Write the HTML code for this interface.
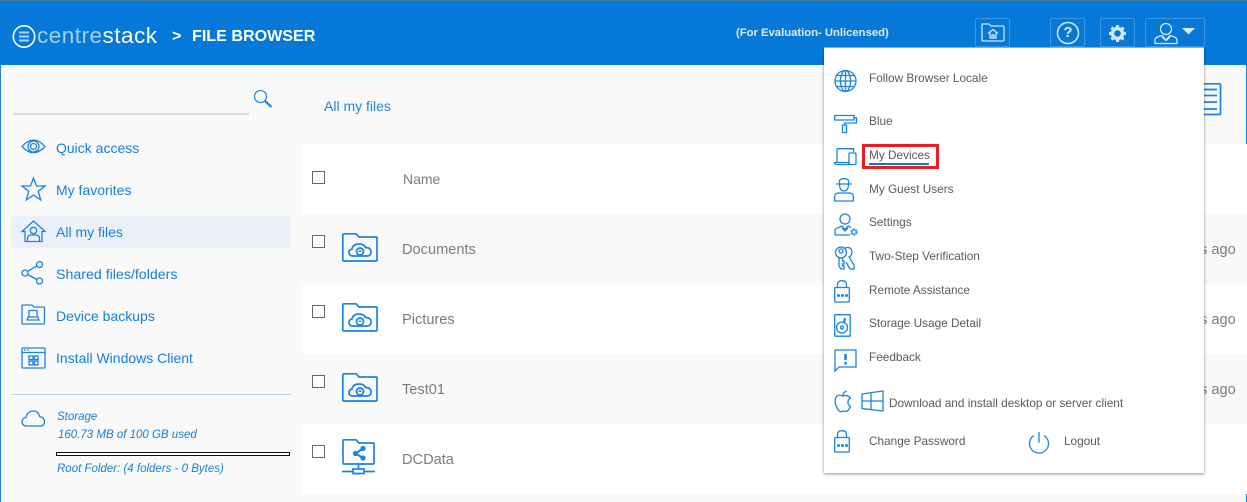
<!DOCTYPE html>
<html><head><meta charset="utf-8"><style>
*{box-sizing:border-box}
html,body{margin:0;padding:0;width:1247px;height:502px;overflow:hidden;background:#f9f9f9;font-family:"Liberation Sans",sans-serif}
.a{position:absolute;white-space:nowrap}
svg{position:absolute;overflow:visible;fill:none;stroke:#1a84de;stroke-width:1.3}
.n{color:#1580dc;font-size:14px;left:56px;line-height:16px}
.r{left:302px;width:945px;height:70px;position:absolute}
.c{position:absolute;left:312px;width:13px;height:13px;border:1px solid #666;background:#fff}
.f{left:402px;color:#7c7c7c;font-size:14.6px;line-height:18px}
.m{color:#5a5a5a;font-size:11.8px;line-height:14px}
.hb{position:absolute;top:18px;height:29px;border:1px solid #3a95e3;border-radius:2px}
.i{font-style:italic;color:#1580dc;font-size:11.5px;left:57px;line-height:14px}
</style></head><body>
<div class="a" style="left:0;top:0;width:1247px;height:65px;background:#0679d8"></div>
<div class="a" style="left:0;top:0;width:1247px;height:1px;background:#4a7a9f"></div>
<div class="a" style="left:0;top:65px;width:1px;height:437px;background:#1a84de"></div>
<div class="a" style="left:1246px;top:65px;width:1px;height:437px;background:#1a84de"></div>

<svg style="left:12px;top:25px" width="24" height="24" viewBox="0 0 24 24"><circle cx="12" cy="11.5" r="10.7" stroke="#fff" stroke-width="1.6"/><path d="M7 7.5h10M7 11.500h10M7 15.500h10" stroke="#a9d2f3" stroke-width="2"/></svg>
<div class="a" style="left:37px;top:23px;font-size:22.500px;line-height:26px;color:#a5cdf0;letter-spacing:.5px">centre<span style="color:#fff">stack</span></div>
<div class="a" style="left:172px;top:26px;font-size:16.100px;line-height:20px;color:#fff;font-weight:bold">&gt;</div>
<div class="a" style="left:192px;top:26px;font-size:16.100px;line-height:20px;color:#fff;font-weight:bold">FILE BROWSER</div>
<div class="a" style="left:736px;top:26px;font-size:11.280px;line-height:14px;color:#dfeaf5;font-weight:bold">(For Evaluation- Unlicensed)</div>

<div class="hb" style="left:975px;width:35px"></div>
<svg style="left:981px;top:23px;stroke:#cfe5f8" width="24" height="19" viewBox="0 0 24 19"><path d="M1 3V1.500Q1 1 1.500 1H8L10 3H22Q23 3 23 4V17Q23 18 22 18H2Q1 18 1 17Z"/><path d="M7 10.500L12 6.500L17 10.500M9 9.500V15H15V9.500M11 15V12H13V15"/></svg>
<div class="hb" style="left:1050px;width:35px"></div>
<svg style="left:1056px;top:21px;stroke:#d7e9f9" width="24" height="24" viewBox="0 0 24 24"><circle cx="12" cy="12" r="10.500" stroke-width="1.500"/></svg>
<div class="a" style="left:1056px;top:23px;width:24px;text-align:center;color:#d7e9f9;font-size:15px;font-weight:bold;line-height:20px">?</div>
<div class="hb" style="left:1100px;width:35px"></div>
<svg style="left:1108px;top:24px;stroke:#cfe5f8;stroke-width:3.500" width="19" height="19" viewBox="0 0 19 19"><circle cx="9.500" cy="9.500" r="5"/><path d="M9.500 1v3M9.500 15v3M1 9.500h3M15 9.500h3M3.500 3.500l2 2M13.500 13.500l2 2M3.500 15.500l2-2M13.500 5.500l2-2" stroke-width="3.200"/></svg>
<div class="hb" style="left:1145px;width:60px"></div>
<svg style="left:1154px;top:22px;stroke:#d7e9f9" width="24" height="23" viewBox="0 0 24 23"><circle cx="12" cy="7" r="5.500"/><path d="M1 21.500V18Q1 15.500 5 14.500L8 13.500L12 18L16 13.500L19 14.500Q23 15.500 23 18V21.500Z"/><path d="M8 15l4 3.500 4-3.500"/></svg>
<svg style="left:1182px;top:28px;stroke:none;fill:#d7e9f9" width="14" height="7"><path d="M0 0H13L6.500 6.500Z"/></svg>

<!-- search -->
<div class="a" style="left:13px;top:113px;width:236px;height:2px;background:#d8d8d8"></div>
<svg style="left:253px;top:89px;stroke:#2a8be0" width="20" height="20" viewBox="0 0 20 20"><circle cx="7.500" cy="7.500" r="6"/><path d="M12 12l6.500 6" stroke-width="2.500"/></svg>
<div class="a" style="left:324px;top:98px;color:#2388df;font-size:14px;line-height:16px">All my files</div>

<!-- sidebar -->
<div class="a" style="left:11px;top:216px;width:280px;height:32px;background:#ecf1f9"></div>
<svg style="left:21px;top:138px" width="25" height="17" viewBox="0 0 25 17"><path d="M1 8.500Q12.500 -4.500 24 8.500Q12.500 21 1 8.500Z"/><circle cx="12.500" cy="8.500" r="5.500"/><circle cx="12.500" cy="8.500" r="3"/></svg>
<svg style="left:21px;top:177px" width="25" height="25" viewBox="0 0 25 25"><path d="M12.500 1L15.500 9H24L17.200 14.300L19.800 23L12.500 18L5.200 23L7.800 14.300L1 9H9.500Z"/></svg>
<svg style="left:21px;top:220px" width="25" height="23" viewBox="0 0 25 23"><path d="M1 11.500L12.500 1L24 11.500H21V21.500H4V11.500Z"/><circle cx="12.500" cy="10.500" r="3.200"/><path d="M6.500 21.500V18Q7 15 10.500 15H14.500Q18 15 18.500 18V21.500"/></svg>
<svg style="left:21px;top:260px" width="23" height="25" viewBox="0 0 23 25"><circle cx="4" cy="13" r="3"/><circle cx="18.500" cy="4.500" r="3"/><circle cx="18.500" cy="21" r="3"/><path d="M6.500 11.500L16 5.800M6.500 14.500L16 19.500"/></svg>
<svg style="left:21px;top:304px" width="24" height="21" viewBox="0 0 24 21"><path d="M1 2Q1 1 2 1H11L13 3H22Q23.500 3 23.500 4V19Q23.500 20 22 20H2Q1 20 1 19Z"/><path d="M8 6.500H16V13H8ZM6 16H18L17 13H7Z"/></svg>
<svg style="left:21px;top:347px" width="24" height="22" viewBox="0 0 24 22"><rect x="1" y="1" width="23" height="20" rx="1"/><path d="M1 5.500H24M3 3H4.500M6 3H7.500"/><path d="M8 9H12V12.500H8ZM13.500 9H17V12.500H13.500ZM8 14H12V18H8ZM13.500 14H17V18H13.500Z"/></svg>
<div class="a n" style="top:140px">Quick access</div>
<div class="a n" style="top:182px">My favorites</div>
<div class="a n" style="top:224px">All my files</div>
<div class="a n" style="top:267px;font-size:14.200px">Shared files/folders</div>
<div class="a n" style="top:308px">Device backups</div>
<div class="a n" style="top:350px">Install Windows Client</div>

<div class="a" style="left:11px;top:394px;width:280px;height:1px;background:#b3d2ee"></div>
<svg style="left:21px;top:410px" width="24" height="17" viewBox="0 0 24 17"><path d="M6 16Q1 16 1 11.500Q1 8 5 7.500Q6.500 1 12.500 1Q17.500 1 18.500 6.500Q23.500 7.500 23.500 11.500Q23.500 16 19 16Z"/></svg>
<div class="a i" style="top:410px">Storage</div>
<div class="a i" style="top:428px;left:58px">160.73 MB of 100 GB used</div>
<div class="a" style="left:56px;top:452px;width:234px;height:4px;border:1px solid #111;background:#fff"></div>
<div class="a i" style="top:462px">Root Folder: (4 folders - 0 Bytes)</div>

<!-- table -->
<div class="r" style="top:144px;background:#fff"></div>
<div class="r" style="top:214px;background:#f9f9f9"></div>
<div class="r" style="top:284px;background:#fff"></div>
<div class="r" style="top:354px;background:#f9f9f9"></div>
<div class="r" style="top:424px;background:#fff"></div>
<div class="c" style="top:171px"></div><div class="c" style="top:235px"></div><div class="c" style="top:305px"></div><div class="c" style="top:375px"></div><div class="c" style="top:445px"></div>
<div class="a f" style="left:403px;top:170px;font-size:14px">Name</div>
<div class="a f" style="top:241px">Documents</div>
<div class="a f" style="top:311px">Pictures</div>
<div class="a f" style="top:381px">Test01</div>
<div class="a f" style="top:451px">DCData</div>
<div class="a f" style="left:1200px;top:241px;width:40px;overflow:hidden">s ago</div>
<div class="a f" style="left:1200px;top:311px;width:40px;overflow:hidden">s ago</div>
<div class="a f" style="left:1200px;top:381px;width:40px;overflow:hidden">s ago</div>

<svg style="left:342px;top:233px;stroke-width:1.700" width="36" height="29" viewBox="0 0 36 29"><path d="M.8 2Q.8 .8 2 .8H14L17 4H34Q35 4 35 5V27Q35 28 34 28H2Q.8 28 .8 27Z"/><path d="M11 23Q7 23 7 19.500Q7 16.500 10 16Q11 11 17 11Q22 11 23.500 14.500Q29 14.500 29 19Q29 23 25 23Z"/><circle cx="18" cy="18.500" r="3.500"/><path d="M16.500 18.500h3M18 16.500v2" stroke-width="1"/></svg>
<svg style="left:342px;top:303px;stroke-width:1.700" width="36" height="29" viewBox="0 0 36 29"><path d="M.8 2Q.8 .8 2 .8H14L17 4H34Q35 4 35 5V27Q35 28 34 28H2Q.8 28 .8 27Z"/><path d="M11 23Q7 23 7 19.500Q7 16.500 10 16Q11 11 17 11Q22 11 23.500 14.500Q29 14.500 29 19Q29 23 25 23Z"/><circle cx="18" cy="18.500" r="3.500"/><path d="M16.500 18.500h3M18 16.500v2" stroke-width="1"/></svg>
<svg style="left:342px;top:373px;stroke-width:1.700" width="36" height="29" viewBox="0 0 36 29"><path d="M.8 2Q.8 .8 2 .8H14L17 4H34Q35 4 35 5V27Q35 28 34 28H2Q.8 28 .8 27Z"/><path d="M11 23Q7 23 7 19.500Q7 16.500 10 16Q11 11 17 11Q22 11 23.500 14.500Q29 14.500 29 19Q29 23 25 23Z"/><circle cx="18" cy="18.500" r="3.500"/><path d="M16.500 18.500h3M18 16.500v2" stroke-width="1"/></svg>
<svg style="left:342px;top:439px;stroke-width:1.700" width="34" height="35" viewBox="0 0 34 35"><path d="M1 1.500Q1 .8 2 .8H14L17 4H31Q32 4 32 5V24Q32 25 31 25H2Q1 25 1 24Z"/><path d="M16.500 25V29M0 32.500H11M22 32.500H33M11 30H22V34.500H11Z"/><path d="M21 9.500L13.500 14.500L21 19" stroke-width="2"/><circle cx="13.500" cy="14.500" r="1.800" fill="#1a84de"/><circle cx="21" cy="9.500" r="1.800" fill="#1a84de"/><circle cx="21" cy="19" r="1.800" fill="#1a84de"/></svg>

<!-- list icon behind dropdown -->
<svg style="left:1197px;top:83px;stroke:#1a84de;stroke-width:1.700" width="25" height="33" viewBox="0 0 25 33"><path d="M3 .8H22.500Q23.500 .8 23.500 1.800V30.500Q23.500 31.500 22.500 31.500H3"/><path d="M3 6.500H20M3 12.500H20M3 19H20M3 26H20"/></svg>

<!-- dropdown -->
<div class="a" style="left:824px;top:48px;width:380px;height:425px;background:#fff;box-shadow:0 1px 3px rgba(0,0,0,.45)"></div>
<div class="a" style="left:824px;top:47px;width:380px;height:1px;background:#74b5ec"></div>

<svg style="left:834px;top:69px" width="23" height="24" viewBox="0 0 23 24"><circle cx="11.500" cy="12" r="10.500"/><ellipse cx="11.500" cy="12" rx="5" ry="10.500"/><path d="M11.500 1.500V22.500M1 12H22M2.500 6.500H20.500M2.500 17.500H20.500"/></svg>
<svg style="left:834px;top:113px" width="23" height="21" viewBox="0 0 23 21"><path d="M.7 2.500H20V7H.7ZM20 4.800H22.500V10H10.500V12M8.500 12H12.500V19.500H8.500Z"/></svg>
<svg style="left:834px;top:148px" width="23" height="18" viewBox="0 0 23 18"><path d="M3 14V1.500Q3 .7 4 .7H19.500V4M0.500 14.500H14.500V16.500H1.500Z"/><rect x="15" y="5" width="7" height="11.500" rx="1"/></svg>
<svg style="left:834px;top:178px" width="20" height="24" viewBox="0 0 20 24"><path d="M2 6H18M5.500 6V3Q5.500 .7 10 .7Q14.500 .7 14.500 3V6M5.500 6Q5.500 13 10 13Q14.500 13 14.500 6"/><path d="M.7 23V18.500Q.7 15.500 4 15H16Q19.300 15.500 19.300 18.500V23Z"/></svg>
<svg style="left:834px;top:213px" width="24" height="23" viewBox="0 0 24 23"><circle cx="11" cy="6" r="5"/><path d="M1 22V18Q1 15 5 14.500L8 13L11 16.500L14 13L17 14.500M1 22H16M8 15l3 3 3-3"/><circle cx="20" cy="19" r="2.500" stroke-width="2" stroke-dasharray="2 .6"/></svg>
<svg style="left:834px;top:246px" width="21" height="24" viewBox="0 0 21 24"><circle cx="7" cy="6.500" r="5.500"/><circle cx="7" cy="5" r="2"/><path d="M5 11.500V20L7 23H10V20H8.500V18H10V15H8.500V12M11 2Q17 0 18 6Q17.500 10 15 11L20 19V23H16L12 16"/></svg>
<svg style="left:834px;top:280px" width="16" height="23" viewBox="0 0 16 23"><path d="M3.500 7.500V4.500Q3.500 .7 8 .7Q12.500 .7 12.500 4.500V7.500"/><rect x=".7" y="7.500" width="14.600" height="14.500" rx="1"/></svg>
<div class="a" style="left:837px;top:294px;width:3px;height:3px;background:#1a84de;border-radius:2px;box-shadow:4px 0 #1a84de,8px 0 #1a84de"></div>
<svg style="left:834px;top:314px" width="17" height="23" viewBox="0 0 17 23"><rect x=".7" y=".7" width="15.500" height="21.500" rx=".5"/><circle cx="8" cy="13.500" r="5.500"/><circle cx="8" cy="13.500" r="1.500"/><path d="M11 4L10 9" stroke-width="2"/></svg>
<svg style="left:834px;top:349px" width="23" height="23" viewBox="0 0 23 23"><path d="M1 22V1H22V18H5Z"/><path d="M11.500 5V11" stroke-width="2.500"/><path d="M11.500 13V15.500" stroke-width="2.500"/></svg>
<svg style="left:834px;top:390px" width="18" height="23" viewBox="0 0 18 23"><path d="M9 6Q5 4 2.500 6.500Q0 10 2 15.500Q4 21 6 21.500Q8 22 9 21Q11 22 13 21Q15 20 16.500 16.500Q13.500 15 14 11.500Q14.500 9 16.500 8Q13.500 4.500 9 6ZM9 5.500Q9.500 2 12.500 1"/></svg>
<svg style="left:861px;top:390px" width="23" height="22" viewBox="0 0 23 22"><path d="M1 4L22 1V21L1 18.500ZM10 2.800V19.800M1 11H22"/></svg>
<svg style="left:834px;top:430px" width="16" height="23" viewBox="0 0 16 23"><path d="M3.500 7.500V4.500Q3.500 .7 8 .7Q12.500 .7 12.500 4.500V7.500"/><rect x=".7" y="7.500" width="14.600" height="14.500" rx="1"/></svg>
<div class="a" style="left:837px;top:444px;width:3px;height:3px;background:#1a84de;border-radius:2px;box-shadow:4px 0 #1a84de,8px 0 #1a84de"></div>
<svg style="left:1028px;top:431px" width="22" height="23" viewBox="0 0 22 23"><path d="M6 4.500A9.500 9.500 0 1 0 16 4.500M11 1V11.500"/></svg>

<div class="a m" style="left:869px;top:71px">Follow Browser Locale</div>
<div class="a m" style="left:869px;top:114px">Blue</div>
<div class="a m" style="left:869px;top:148px">My Devices</div>
<div class="a" style="left:869px;top:163px;width:60px;height:2px;background:#0679d8"></div>
<div class="a" style="left:862px;top:144px;width:77px;height:25px;border:3px solid #ed1c24"></div>
<div class="a m" style="left:869px;top:182px">My Guest Users</div>
<div class="a m" style="left:869px;top:215px">Settings</div>
<div class="a m" style="left:869px;top:249px">Two-Step Verification</div>
<div class="a m" style="left:869px;top:283px">Remote Assistance</div>
<div class="a m" style="left:869px;top:316px">Storage Usage Detail</div>
<div class="a m" style="left:869px;top:350px">Feedback</div>
<div class="a m" style="left:889px;top:396px">Download and install desktop or server client</div>
<div class="a m" style="left:869px;top:434px">Change Password</div>
<div class="a m" style="left:1064px;top:434px">Logout</div>
</body></html>
